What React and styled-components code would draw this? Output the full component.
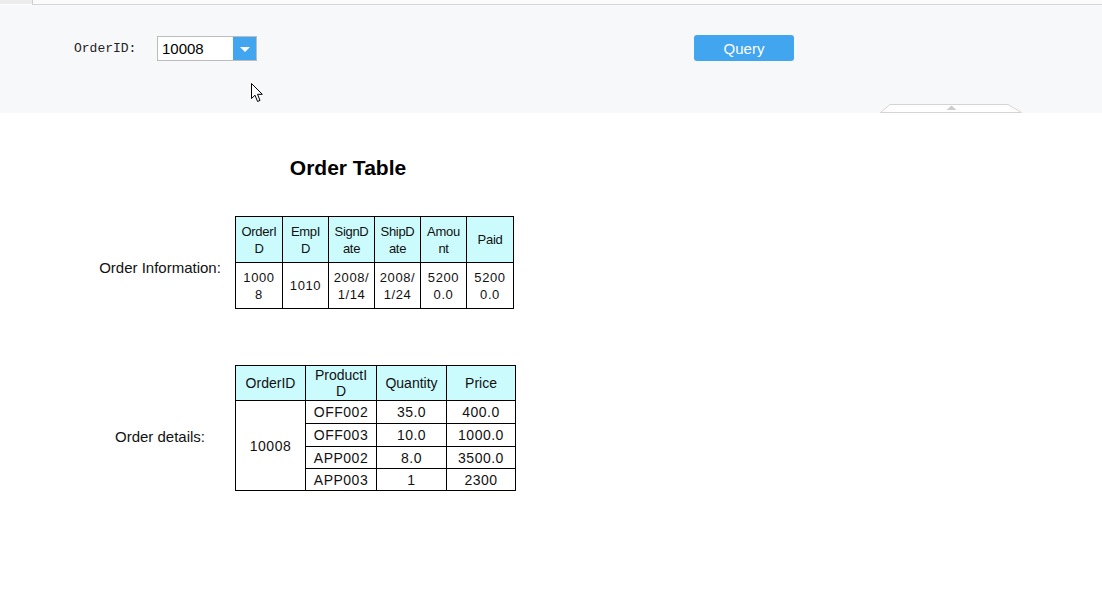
import React from "react";
import styled, { createGlobalStyle } from "styled-components";

const orderInfo = {
  headers: ["OrderID", "EmpID", "SignDate", "ShipDate", "Amount", "Paid"],
  widths: [47, 46, 46, 46, 46, 47],
  values: ["10008", "1010", "2008/1/14", "2008/1/24", "52000.0", "52000.0"],
};

const details = {
  orderId: "10008",
  headers: ["OrderID", "ProductID", "Quantity", "Price"],
  widths: [70, 71, 70, 69],
  rows: [
    ["OFF002", "35.0", "400.0"],
    ["OFF003", "10.0", "1000.0"],
    ["APP002", "8.0", "3500.0"],
    ["APP003", "1", "2300"],
  ],
};

function App() {
  return (
    <Page>
      <GlobalStyle />
      <TopStrip>
        <TabStub />
        <TabLine />
      </TopStrip>
      <Panel>
        <QueryRow>
          <FieldLabel>OrderID:</FieldLabel>
          <Combo>
            <ComboValue>10008</ComboValue>
            <ComboArrow>
              <Caret />
            </ComboArrow>
          </Combo>
          <QueryButton>Query</QueryButton>
        </QueryRow>
        <Pointer width="13" height="20" viewBox="0 0 13 20">
          <path
            d="M0.5 0.5 L0.5 15.5 L4 12.2 L6.6 18.5 L9 17.4 L6.5 11.3 L11.3 11.3 Z"
            fill="#fff"
            stroke="#000"
            strokeWidth="1"
            strokeLinejoin="round"
          />
        </Pointer>
        <CollapseTab width="142" height="9" viewBox="0 0 142 9">
          <polygon points="10,0.5 128,0.5 141.5,8.5 0.5,8.5" fill="#fff" stroke="#d4d4d4" />
          <polygon points="66.5,6 71.5,1.5 76.5,6" fill="#cdcdcd" />
        </CollapseTab>
      </Panel>

      <Report>
        <Title>Order Table</Title>

        <Section $gap={36}>
          <SectionLabel $shift={10}>Order Information:</SectionLabel>
          <Grid>
            <colgroup>
              {orderInfo.widths.map((w, i) => (
                <Col key={i} $w={w} />
              ))}
            </colgroup>
            <thead>
              <tr>
                {orderInfo.headers.map((h) => (
                  <HeadCell key={h} $compact>
                    {h}
                  </HeadCell>
                ))}
              </tr>
            </thead>
            <tbody>
              <tr>
                {orderInfo.values.map((v, i) => (
                  <Cell key={i} $compact $h={45}>
                    {v}
                  </Cell>
                ))}
              </tr>
            </tbody>
          </Grid>
        </Section>

        <Section $gap={56}>
          <SectionLabel $shift={17}>Order details:</SectionLabel>
          <Grid>
            <colgroup>
              {details.widths.map((w, i) => (
                <Col key={i} $w={w} />
              ))}
            </colgroup>
            <thead>
              <tr>
                {details.headers.map((h) => (
                  <HeadCell key={h}>{h}</HeadCell>
                ))}
              </tr>
            </thead>
            <tbody>
              {details.rows.map((row, i) => (
                <tr key={i}>
                  {i === 0 && (
                    <Cell rowSpan={details.rows.length} $h={21}>
                      {details.orderId}
                    </Cell>
                  )}
                  {row.map((v, j) => (
                    <Cell key={j} $h={i < 2 ? 22 : 21}>
                      {v}
                    </Cell>
                  ))}
                </tr>
              ))}
            </tbody>
          </Grid>
        </Section>
      </Report>
    </Page>
  );
}

const GlobalStyle = createGlobalStyle`
  html, body {
    margin: 0;
    padding: 0;
    background: #fff;
  }
  body {
    font-family: "Liberation Sans", Arial, sans-serif;
    color: #000;
    width: 1102px;
    height: 612px;
    overflow: hidden;
  }
`;

const Page = styled.div`
  display: flex;
  flex-direction: column;
  min-height: 612px;
  background: #fff;
`;

const TopStrip = styled.div`
  display: flex;
  height: 5px;
`;

const TabStub = styled.div`
  width: 32px;
  height: 4px;
  background: #ececec;
`;

const TabLine = styled.div`
  flex: 1;
  background: #fbfbfb;
  border-left: 1px solid #cfcfcf;
  border-bottom: 1px solid #d6d6d6;
`;

const Panel = styled.div`
  position: relative;
  height: 108px;
  box-sizing: border-box;
  padding: 30px 0 0 74px;
  background: #f7f8fa;
`;

const QueryRow = styled.div`
  display: flex;
  align-items: center;
  height: 26px;
`;

const FieldLabel = styled.span`
  width: 83px;
  font-family: "Liberation Mono", "DejaVu Sans Mono", monospace;
  font-size: 13px;
  color: #222;
`;

const Combo = styled.div`
  display: flex;
  width: 100px;
  height: 25px;
  box-sizing: border-box;
  border: 1px solid #bcbcbc;
  background: #fff;
`;

const ComboValue = styled.span`
  flex: 1;
  padding-left: 4px;
  font-size: 15px;
  line-height: 23px;
  color: #000;
`;

const ComboArrow = styled.span`
  width: 23px;
  display: flex;
  align-items: center;
  justify-content: center;
  background: #42a5ef;
`;

const Caret = styled.span`
  width: 0;
  height: 0;
  margin-top: 2px;
  border-left: 5px solid transparent;
  border-right: 5px solid transparent;
  border-top: 5px solid #fff;
`;

const QueryButton = styled.button`
  margin-left: 437px;
  width: 100px;
  height: 26px;
  padding: 0;
  border: 0;
  border-radius: 3px;
  background: #42a5ef;
  color: #fff;
  font-family: "Liberation Sans", Arial, sans-serif;
  font-size: 15px;
  cursor: pointer;
`;

const Pointer = styled.svg`
  position: absolute;
  left: 251px;
  top: 78px;
`;

const CollapseTab = styled.svg`
  position: absolute;
  left: 880px;
  bottom: 0;
  display: block;
`;

const Report = styled.div`
  padding: 43px 0 0 87px;
`;

const Title = styled.h1`
  margin: 0;
  width: 522px;
  text-align: center;
  font-size: 21px;
  line-height: 24px;
  font-weight: bold;
  color: #000;
`;

const Section = styled.div`
  display: grid;
  grid-template-columns: 146px auto;
  column-gap: 2px;
  align-items: center;
  justify-content: start;
  margin-top: ${(p) => p.$gap}px;
`;

const SectionLabel = styled.div`
  padding-top: ${(p) => p.$shift}px;
  text-align: center;
  font-size: 15px;
  color: #111;
`;

const Grid = styled.table`
  border-collapse: collapse;
  table-layout: fixed;
`;

const Col = styled.col`
  width: ${(p) => p.$w}px;
`;

const HeadCell = styled.th`
  height: ${(p) => (p.$compact ? "45px" : "34px")};
  padding: 0 ${(p) => (p.$compact ? "4px" : "6px")};
  border: 1px solid #000;
  background: #ccfbfd;
  font-weight: normal;
  font-size: ${(p) => (p.$compact ? "13px" : "14px")};
  line-height: ${(p) => (p.$compact ? "17px" : "16px")};
  letter-spacing: ${(p) => (p.$compact ? "-0.3px" : "0")};
  text-align: center;
  vertical-align: middle;
  word-break: break-all;
  color: #111;
`;

const Cell = styled.td`
  height: ${(p) => p.$h}px;
  padding: 0 ${(p) => (p.$compact ? "4px" : "6px")};
  border: 1px solid #000;
  background: #fff;
  font-size: ${(p) => (p.$compact ? "13px" : "14px")};
  line-height: ${(p) => (p.$compact ? "17px" : "16px")};
  letter-spacing: ${(p) => (p.$compact ? "0.6px" : "0.5px")};
  text-align: center;
  vertical-align: middle;
  word-break: break-all;
  color: #111;
`;

export default App;
